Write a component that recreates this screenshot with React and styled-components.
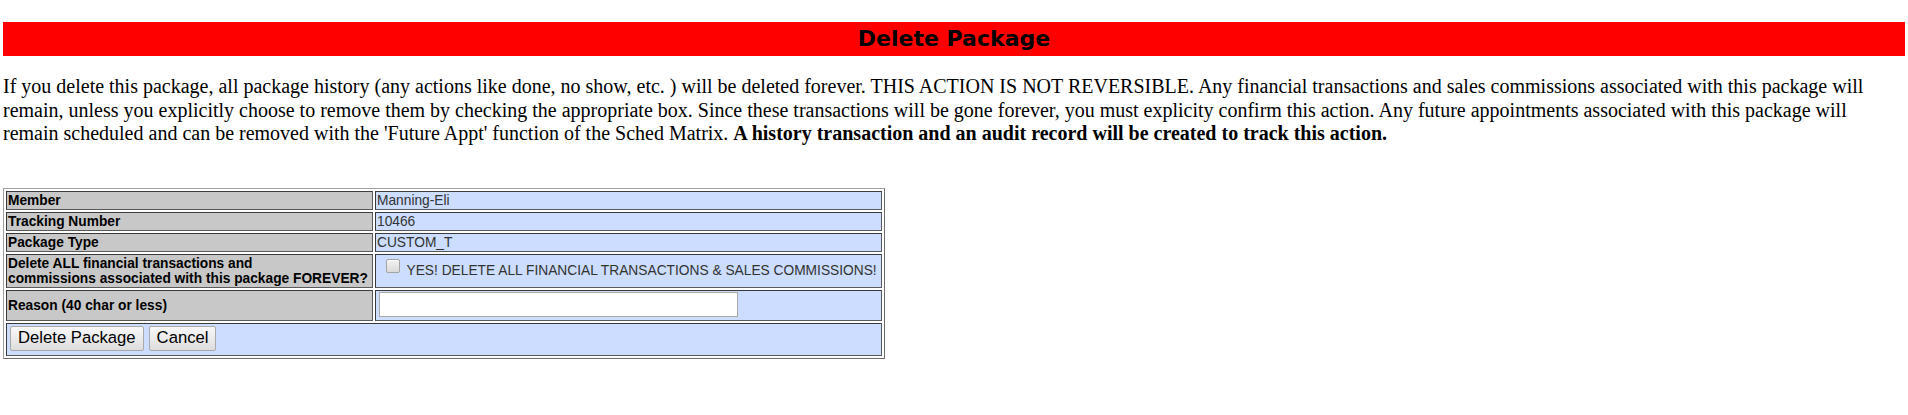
import React from 'react'
import styled, { createGlobalStyle } from 'styled-components'

const GlobalStyle = createGlobalStyle`
  html, body {
    margin: 0;
    padding: 0;
    background: #fff;
  }
  body {
    font-family: "Liberation Serif", "Times New Roman", serif;
  }
`

const Page = styled.div`
  padding: 22px 3px 40px;
`

const TitleBar = styled.h1`
  margin: 0;
  height: 34px;
  line-height: 34px;
  background: #ff0000;
  color: #000;
  text-align: center;
  font-family: "DejaVu Sans", Verdana, sans-serif;
  font-weight: bold;
  font-size: 22px;
`

const Notice = styled.p`
  margin: 19px 0 0;
  font-size: 20px;
  line-height: 23.5px;
  color: #000;
`

const Form = styled.table`
  margin-top: 42px;
  width: 882px;
  table-layout: fixed;
  border-collapse: separate;
  border-spacing: 2px;
  border: 1px solid;
  border-color: #a0a0a0 #6e6e6e #6e6e6e #a0a0a0;
  font-family: "Liberation Sans", Arial, sans-serif;
  font-size: 13.75px;
  line-height: 15px;
`

const Cell = styled.td`
  padding: 1px;
  border: 1px solid;
  border-color: #3a3a3a #5a5a5a #5a5a5a #3a3a3a;
  vertical-align: middle;
  background: ${p => (p.$label ? '#c8c8c8' : '#ccddff')};
  color: ${p => (p.$label ? '#000' : '#333')};
  font-weight: ${p => (p.$label ? 'bold' : 'normal')};
`

const CheckLine = styled.label`
  display: block;
  padding-bottom: 4px;
  color: #333;
`

const Check = styled.input`
  appearance: none;
  display: inline-block;
  box-sizing: border-box;
  width: 13.5px;
  height: 13.5px;
  margin: 0 7px 2px 9px;
  vertical-align: baseline;
  border: 1px solid #a3a3a3;
  border-radius: 2px;
  background: linear-gradient(#f2f2f2, #dadada);
  box-shadow: inset 0 1px 1px rgba(255, 255, 255, 0.8);
`

const ReasonInput = styled.input`
  display: block;
  box-sizing: border-box;
  width: 359px;
  height: 25.5px;
  margin: 0 0 2px 2px;
  border: 1px solid #a9a9a9;
  background: #fff;
  font-family: "Liberation Sans", Arial, sans-serif;
  font-size: 16px;
`

const Actions = styled.div`
  display: flex;
  gap: 5px;
  padding: 1px 0 3px 2px;
`

const Button = styled.button`
  height: 24.5px;
  padding: 0 7px;
  border: 1px solid #a9a9a9;
  border-radius: 2px;
  background: linear-gradient(#f8f8f8, #dddddd);
  color: #000;
  font-family: "Liberation Sans", Arial, sans-serif;
  font-size: 16.67px;
  line-height: 20px;
  cursor: pointer;
`

const rows = [
  ['Member', 'Manning-Eli'],
  ['Tracking Number', '10466'],
  ['Package Type', 'CUSTOM_T'],
]

export default function App() {
  return (
    <Page>
      <GlobalStyle />
      <TitleBar>Delete Package</TitleBar>
      <Notice>
        If you delete this package, all package history (any actions like done, no show, etc. ) will be deleted
        forever. THIS ACTION IS NOT REVERSIBLE. Any financial transactions and sales commissions associated with
        this package will remain, unless you explicitly choose to remove them by checking the appropriate box.
        Since these transactions will be gone forever, you must explicity confirm this action. Any future
        appointments associated with this package will remain scheduled and can be removed with the 'Future Appt'
        function of the Sched Matrix.{' '}
        <b>A history transaction and an audit record will be created to track this action.</b>
      </Notice>

      <Form>
        <colgroup>
          <col style={{ width: 367 }} />
          <col />
        </colgroup>
        <tbody>
          {rows.map(([label, value]) => (
            <tr key={label}>
              <Cell $label>{label}</Cell>
              <Cell>{value}</Cell>
            </tr>
          ))}
          <tr>
            <Cell $label>
              Delete ALL financial transactions and
              <br />
              commissions associated with this package FOREVER?
            </Cell>
            <Cell>
              <CheckLine>
                <Check type="checkbox" />
                YES! DELETE ALL FINANCIAL TRANSACTIONS &amp; SALES COMMISSIONS!
              </CheckLine>
            </Cell>
          </tr>
          <tr>
            <Cell $label>Reason (40 char or less)</Cell>
            <Cell>
              <ReasonInput type="text" maxLength={40} />
            </Cell>
          </tr>
          <tr>
            <Cell colSpan={2}>
              <Actions>
                <Button>Delete Package</Button>
                <Button>Cancel</Button>
              </Actions>
            </Cell>
          </tr>
        </tbody>
      </Form>
    </Page>
  )
}
